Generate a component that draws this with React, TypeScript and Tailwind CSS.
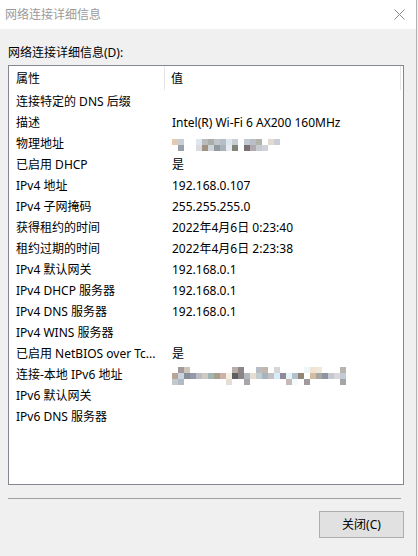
const F = '"Noto Sans", "Noto Sans CJK SC", sans-serif';

const rows: [string, string | null][] = [
  ["连接特定的 DNS 后缀", ""],
  ["描述", "Intel(R) Wi-Fi 6 AX200 160MHz"],
  ["物理地址", null],
  ["已启用 DHCP", "是"],
  ["IPv4 地址", "192.168.0.107"],
  ["IPv4 子网掩码", "255.255.255.0"],
  ["获得租约的时间", "2022年4月6日 0:23:40"],
  ["租约过期的时间", "2022年4月6日 2:23:38"],
  ["IPv4 默认网关", "192.168.0.1"],
  ["IPv4 DHCP 服务器", "192.168.0.1"],
  ["IPv4 DNS 服务器", "192.168.0.1"],
  ["IPv4 WINS 服务器", ""],
  ["已启用 NetBIOS over Tc...", "是"],
  ["连接-本地 IPv6 地址", null],
  ["IPv6 默认网关", ""],
  ["IPv6 DNS 服务器", ""],
];

const W = "#ffffff";
const macCells = [
  ["#e2cbb2", "#c9cdd4", W, W, "#dfe6ee", "#b9bcbf", "#a9ada8", "#c1c5c9", "#b5bdc8", "#dae5ee", "#c9cdd1", W, "#c1c9d1", "#b9bdc5", "#b1b5a9", W, "#e2dad2", "#c9cdd5"],
  [W, "#9aa0a8", W, W, "#d8dce1", "#a19181", "#d1d5d9", "#9199a1", "#a9b1b9", "#e9e9f1", "#818579", W, "#797171", "#b1a9b1", "#c9c9d1", "#d1d1d9", W, W],
];
const v6Cells = [
  [W, "#a59a9a", "#cdc6bd", W, W, W, W, W, W, W, "#b8aea6", "#8e8689", W, W, "#b6bcc6", "#c3b7ac", W, "#d6d6d6", W, W, W, W, "#eef6f6", "#efe3d6", "#f1e8dc", W, W, W, "#b8b4b0", W],
  ["#b9a596", "#c7d3dd", "#878f99", "#9599a6", "#bdbcc4", "#cdc9c1", "#a3b5b1", "#a79f8e", "#cdb0a7", "#f4eee3", "#5f5f5f", "#8a8584", "#b2b9c1", "#e6dcd0", "#c5ccd0", "#a5b5bf", "#c6c0c4", "#d6ecf8", "#8e8a98", "#e5f3f4", "#b1c1cd", "#918675", W, "#d2bca2", "#a9a6a2", "#8b949f", "#c9c8d0", "#d8d8dc", "#c2ccd4", W],
  ["#c3c9cb", "#b1bac6", W, W, W, W, W, W, W, "#e6ddd5", W, W, "#a8a4a8", W, W, W, W, W, W, "#c5b9b9", "#f4f9fb", W, "#a39aa0", W, W, W, W, W, "#a5a5a5", W],
];

function Mosaic({ cells, cw }: { cells: string[][]; cw: number }) {
  return (
    <div className="flex flex-col">
      {cells.map((r, i) => (
        <div key={i} className="flex">
          {r.map((c, j) => (
            <div key={j} style={{ backgroundColor: c, width: cw, height: 6 }} />
          ))}
        </div>
      ))}
    </div>
  );
}

export default function App() {
  return (
    <div className="flex w-[418px] h-[556px] bg-[#f0f0f0] text-[12px] text-black" style={{ fontFamily: F }}>
      <div className="flex flex-col w-[416px] h-full">
        <div className="flex items-center justify-between h-[29px] bg-white pl-[5px] pr-[11px]">
          <span className="text-[#9a9a9a] leading-none">网络连接详细信息</span>
          <svg width="11" height="11" viewBox="0 0 11 11">
            <path d="M0.5 0.5 L10.5 10.5 M10.5 0.5 L0.5 10.5" stroke="#8c8c8c" strokeWidth="1" />
          </svg>
        </div>
        <div className="flex flex-col flex-1 pl-[8px] pr-[12px]">
          <div className="h-[16px] mt-[16px] leading-[16px]">网络连接详细信息(D):</div>
          <div className="mt-[4px] h-[420px] border border-[#828790] bg-white flex flex-col">
            <div className="flex h-[24px] shrink-0">
              <div className="w-[156px] border-r border-[#e5e5e5] pl-[7px] pt-[2px] flex items-center">属性</div>
              <div className="flex-1 pl-[6px] pt-[2px] flex items-center border-r border-[#e5e5e5] mr-[2px]">值</div>
            </div>
            {rows.map(([k, v], i) => (
              <div key={i} className="flex h-[21px] pt-[3px] items-center shrink-0">
                <div className="w-[157px] pl-[7px] whitespace-nowrap overflow-hidden">{k}</div>
                <div className="flex-1 pl-[6px] whitespace-nowrap">
                  {v === null ? (
                    i === 2 ? (
                      <div className="pt-[1px]">
                        <Mosaic cells={macCells} cw={6} />
                      </div>
                    ) : (
                      <div className="pt-[1px]">
                        <Mosaic cells={v6Cells} cw={6} />
                      </div>
                    )
                  ) : (
                    v
                  )}
                </div>
              </div>
            ))}
          </div>
          <div className="mt-[13px] h-px bg-[#a0a0a0] mr-[3px]" />
          <div className="flex justify-end mt-[12px]">
            <button className="w-[85px] h-[27px] bg-[#e1e1e1] border border-[#adadad] flex items-center justify-center">
              关闭(C)
            </button>
          </div>
        </div>
      </div>
      <div className="w-px h-full bg-[#b4b4b4]" />
      <div className="w-px h-full bg-[#f0f0f0]" />
    </div>
  );
}
